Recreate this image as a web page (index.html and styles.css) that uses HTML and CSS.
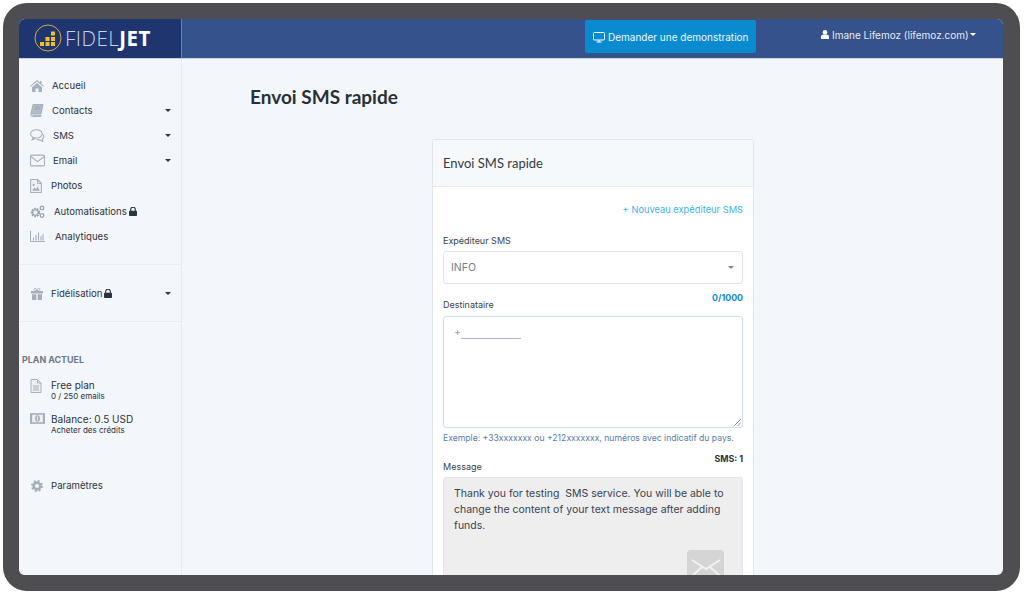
FILE: index.html
```html
<!DOCTYPE html>
<html lang="fr">
<head>
<meta charset="utf-8">
<title>Envoi SMS rapide</title>
<link rel="stylesheet" href="styles.css">
</head>
<body>
<div class="frame">
  <div class="screen">
    <header class="topbar">
      <div class="brand">
        <svg class="logo" viewBox="0 0 28 28" width="28" height="28">
          <circle cx="14" cy="14" r="13" fill="none" stroke="#d9a93a" stroke-width="1"/>
          <g fill="#f6c019">
            <rect x="6" y="18" width="4" height="4"/><rect x="11.500" y="18" width="4" height="4"/><rect x="17" y="18" width="4" height="4"/>
            <rect x="11.500" y="13" width="4" height="4"/><rect x="17" y="13" width="4" height="4"/>
            <rect x="17" y="7.500" width="4" height="4"/>
          </g>
        </svg>
        <span class="wordmark">FIDEL<b>JET</b></span>
      </div>
      <div class="bar">
        <a class="demo">
          <svg viewBox="0 0 12 11" width="12" height="11"><rect x="0.500" y="0.500" width="11" height="7.500" rx="1" fill="none" stroke="#fff"/><path d="M3.500 10h5M6 8v2" stroke="#fff"/></svg>
          Demander une demonstration
        </a>
        <div class="user">
          <svg viewBox="0 0 8 9" width="8" height="9"><circle cx="4" cy="2.300" r="2.300" fill="#fff"/><path d="M0 9V6.500C0 5 1.500 4.500 4 4.500S8 5 8 6.500V9z" fill="#fff"/></svg>
          Imane Lifemoz (lifemoz.com)<i class="caret white"></i>
        </div>
      </div>
    </header>
    <div class="content">
      <aside class="sidebar">
        <nav class="nav">
          <a class="item"><svg class="ico" viewBox="0 0 14 12"><path d="M7 0 0 6l.7.8L7 1.500l6.300 5.300L14 6l-2.500-2.100V1H10v1.600zM2 7.200V12h3.500V8.500h3V12H12V7.200L7 3z" fill="#a6afbc"/></svg><span class="t">Accueil</span></a>
          <a class="item"><svg class="ico tall" viewBox="0 0 14 13"><path d="M3 .5h10L11 10H1z" fill="#b4bcc9" stroke="#9aa4b3" stroke-width=".8"/><path d="M1 10c-.8 1.500 0 2.500 1 2.500h9l.3-1H2.500M5 3h5.500M4.500 5h5.500" fill="none" stroke="#9aa4b3" stroke-width=".8"/></svg><span class="t">Contacts</span><i class="caret"></i></a>
          <a class="item"><svg class="ico wide" viewBox="0 0 14 12"><ellipse cx="6" cy="4.500" rx="5.400" ry="3.900" fill="none" stroke="#a6afbc"/><path d="M3 8 2 10l3-1.500M11.500 4.500c2 1.500 2 3.500 0 4.800L12 11.500 9 10c-1.200.2-2 0-3-.6" fill="none" stroke="#a6afbc"/></svg><span class="t sms">SMS</span><i class="caret"></i></a>
          <a class="item"><svg class="ico wide" viewBox="0 0 14 11"><rect x=".5" y=".5" width="13" height="10" rx="1" fill="none" stroke="#a6afbc"/><path d="m1 2 6 4.500L13 2" fill="none" stroke="#a6afbc"/></svg><span class="t sms">Email</span><i class="caret"></i></a>
          <a class="item"><svg class="ico small" viewBox="0 0 11 13"><path d="M.5.500H7L10.500 4v8.500H.5z" fill="#eef0f4" stroke="#a6afbc"/><path d="M7 .5V4h3.500" fill="none" stroke="#a6afbc"/><circle cx="3.300" cy="5.500" r="1" fill="#a6afbc"/><path d="M2 11l2-3 1.500 1.500L7 7l2 4z" fill="#a6afbc"/></svg><span class="t photos">Photos</span></a>
          <a class="item nudged"><svg class="ico wide" viewBox="0 0 15 13"><circle cx="5.500" cy="7.500" r="3.400" fill="none" stroke="#98a2b0" stroke-width="2.600" stroke-dasharray="1.500 .9"/><circle cx="5.500" cy="7.500" r="3" fill="none" stroke="#98a2b0" stroke-width="1"/><circle cx="12" cy="3" r="1.800" fill="none" stroke="#98a2b0" stroke-width="1.300"/><circle cx="12" cy="10.500" r="1.800" fill="none" stroke="#98a2b0" stroke-width="1.300"/></svg><span class="t auto">Automatisations</span><svg class="lock" viewBox="0 0 8 9"><path d="M1.700 4V2.500a2.300 2.300 0 0 1 4.600 0V4" fill="none" stroke="#2c3340" stroke-width="1.100"/><rect y="3.700" width="8" height="5.300" rx=".7" fill="#2c3340"/></svg></a>
          <a class="item"><svg class="ico wide" viewBox="0 0 15 11"><path d="M.5 0v10.500H15" fill="none" stroke="#a6afbc"/><path d="M3.500 6.500v3M6 4v5.500M8.500 1.500v8M11 5v4.500M13 3v6.500" stroke="#a6afbc" stroke-width="1.100"/></svg><span class="t auto2">Analytiques</span></a>
        </nav>
        <div class="section fidel">
          <a class="item"><svg class="ico" viewBox="0 0 12 12"><path d="M0 3h12v2.500H0zM1 6.300h4.300V12H1zM6.700 6.300H11V12H6.700z" fill="#a6afbc"/><path d="M6 3C3.500 3 2.500 1.500 3.500.7S6 1 6 3c0-2 1.500-3.100 2.500-2.300S8.500 3 6 3z" fill="none" stroke="#a6afbc"/></svg><span class="t photos">Fidélisation</span><svg class="lock" viewBox="0 0 8 9"><path d="M1.700 4V2.500a2.300 2.300 0 0 1 4.600 0V4" fill="none" stroke="#2c3340" stroke-width="1.100"/><rect y="3.700" width="8" height="5.300" rx=".7" fill="#2c3340"/></svg><i class="caret"></i></a>
        </div>
        <div class="plan">
          <h3 class="plan-title">PLAN ACTUEL</h3>
          <div class="plan-row">
            <svg class="ico small" viewBox="0 0 11 14"><path d="M.5.500H7L10.500 4v9.500H.5z" fill="#eef0f4" stroke="#a6afbc"/><path d="M7 .5V4h3.500M2.500 7h6M2.500 9h6M2.500 11h6" fill="none" stroke="#a6afbc"/></svg>
            <div class="plan-text"><span class="p1">Free plan</span><span class="p2">0 / 250 emails</span></div>
          </div>
          <div class="plan-row">
            <svg class="ico money" viewBox="0 0 14 10"><rect width="14" height="10" fill="#a6afbc"/><rect x="2" y="1.500" width="10" height="7" fill="#eef0f4"/><ellipse cx="7" cy="5" rx="2.200" ry="3" fill="#a6afbc"/><path d="M7 3v4" stroke="#eef0f4"/></svg>
            <div class="plan-text"><span class="p1">Balance: 0.5 USD</span><span class="p2">Acheter des crédits</span></div>
          </div>
        </div>
        <a class="item settings"><svg class="ico" viewBox="0 0 12 12"><circle cx="6" cy="6" r="3.300" fill="none" stroke="#a6afbc" stroke-width="2.500"/><circle cx="6" cy="6" r="4.800" fill="none" stroke="#a6afbc" stroke-width="2.400" stroke-dasharray="1.900 1.870"/></svg><span class="t photos">Paramètres</span></a>
      </aside>
      <main class="main">
        <h1 class="page-title">Envoi SMS rapide</h1>
        <section class="card">
          <div class="card-head">Envoi SMS rapide</div>
          <div class="card-body">
            <a class="new-link">+ Nouveau expéditeur SMS</a>
            <label class="lbl first">Expéditeur SMS</label>
            <div class="select">INFO<i class="caret grey"></i></div>
            <div class="count blue">0/1000</div>
            <label class="lbl dest">Destinataire</label>
            <div class="textarea">
              <span class="plus">+</span><span class="line"></span>
              <svg class="grip" viewBox="0 0 8 8" width="8" height="8"><path d="M1 8l7-7M4.500 8 8 4.500" stroke="#8b8f96"/></svg>
            </div>
            <p class="help">Exemple: +33xxxxxxx ou +212xxxxxxx, numéros avec indicatif du pays.</p>
            <div class="count dark">SMS: 1</div>
            <label class="lbl msg">Message</label>
            <div class="message">
              <p class="msg-text">Thank you for testing&nbsp; SMS service. You will be able to change the content of your text message after adding funds.</p>
              <div class="env"><svg viewBox="0 0 36 26" width="36" height="26"><path d="M4 6l14 9L32 6M4 22l10-9M32 22 22 13" fill="none" stroke="#f2f2f3" stroke-width="2"/></svg></div>
            </div>
          </div>
        </section>
      </main>
    </div>
  </div>
</div>
</body>
</html>
```
FILE: styles.css
```css
* { box-sizing: border-box; }
html, body { margin: 0; height: 100%; background: #fff; overflow: hidden; }
body { font-family: Inter, "Liberation Sans", sans-serif; color: #2c3340; }
.frame {
  width: 1017px; height: 588px; margin: 3px 0 0 3px;
  padding: 16px; background: #4e4d52; border-radius: 24px;
}
.screen {
  display: flex; flex-direction: column; width: 984px; height: 556px;
  border-radius: 6px; overflow: hidden; background: #f3f6fa;
}
.topbar { display: flex; flex: 0 0 40px; border-bottom: 1px solid #c8d0dd; }
.brand {
  flex: 0 0 163px; display: flex; align-items: center; padding: 0 0 2px 15px; gap: 3px;
  background: #1f3570; border-right: 1px solid #6b7ea6;
}
.logo { flex: none; }
.wordmark { font-family: "Open Sans", sans-serif; font-size: 20.500px; color: #c9d3e6; letter-spacing: .5px; font-weight: 300; }
.wordmark b { color: #fff; font-weight: 700; }
.bar { flex: 1; display: flex; align-items: flex-start; background: #36528c; padding: 1px 0 0 403px; }
.demo {
  display: flex; align-items: center; gap: 3px; width: 171px; height: 33px; padding: 1px 0 0 8px;
  background: #0a8bd0; border-radius: 2px; color: #eef6fb; font-size: 10px; white-space: nowrap;
}
.user {
  display: flex; align-items: center; gap: 3px; margin: 6px 0 0 65px; height: 17px;
  color: #e6ebf3; font-size: 10px; white-space: nowrap;
}
.caret {
  display: inline-block; width: 0; height: 0; border: 3px solid transparent; border-top-color: #2c3340; border-bottom: 0;
}
.caret.white { border-top-color: #fff; margin-left: -2px; }
.content { flex: 1; display: flex; min-height: 0; }
.sidebar { flex: 0 0 163px; background: #f3f6fa; border-right: 1px solid #e6eaf0; }
.nav { padding: 14px 0 15px; border-bottom: 1px solid #e9edf2; }
.item { display: flex; align-items: center; height: 25px; padding: 0 10px 0 11px; font-size: 9.600px; color: #2c3340; }
.item.nudged { margin-top: 1px; }
.item .caret { margin-left: auto; }
.ico { flex: none; width: 14px; height: 12px; }
.ico.tall { height: 13px; }
.ico.wide { width: 15px; height: 13px; margin-right: -1px; }
.ico.small { width: 12px; height: 14px; margin-right: 2px; }
.ico.money { width: 15px; height: 11px; margin-right: -1px; }
.t { margin-left: 8px; }
.t.sms { margin-left: 9px; }
.t.photos { margin-left: 7px; }
.t.auto { margin-left: 10px; }
.t.auto2 { margin-left: 11px; }
.lock { width: 8px; height: 9px; margin-left: 2px; flex: none; }
.section.fidel { padding: 16px 0 15px; border-bottom: 1px solid #e9edf2; }
.plan { padding-top: 31px; }
.plan-title { margin: 0 0 12px 3px; font-size: 8.900px; line-height: 14px; font-weight: 700; color: #6b7788; }
.plan-row { display: flex; align-items: flex-start; padding-left: 11px; height: 34px; gap: 7px; }
.plan-text { display: flex; flex-direction: column; }
.p1 { font-size: 10px; line-height: 12px; }
.p2 { font-size: 8px; line-height: 10px; }
.settings { margin-top: 26px; }
.main { flex: 1; min-width: 0; overflow: hidden; }
.page-title { margin: 26px 0 30px 68px; font-family: Lato, sans-serif; font-size: 19px; line-height: 24px; font-weight: 700; color: #2a3038; }
.card { width: 322px; margin-left: 250px; background: #fff; border: 1px solid #dfe5ec; border-radius: 3px 3px 0 0; }
.card-head {
  height: 47px; padding: 0 10px; display: flex; align-items: center;
  font-family: Lato, sans-serif; font-size: 13px; color: #333a45;
  background: #f6f9fb; border-bottom: 1px solid #e6ebf0; border-radius: 3px 3px 0 0;
}
.card-body { padding: 15px 10px 0; }
.new-link { display: block; text-align: right; font-size: 9.300px; line-height: 16px; color: #3fb1e8; }
.lbl { display: block; font-size: 9px; line-height: 12px; color: #3a414c; }
.lbl.first { margin-top: 17px; }
.select {
  display: flex; align-items: center; justify-content: space-between; height: 33px; margin-top: 4px; padding: 0 8px 0 7px;
  border: 1px solid #dfe5ec; border-radius: 3px; font-size: 10.500px; color: #76808d;
}
.caret.grey { border-top-color: #80868f; }
.count { text-align: right; font-size: 8.800px; line-height: 12px; font-weight: 700; }
.count.blue { margin-top: 8px; color: #1589cc; }
.count.dark { margin-top: 8px; color: #2c3340; }
.lbl.dest { margin-top: -5px; }
.textarea {
  position: relative; height: 112px; margin-top: 5px; padding: 7px 10px; display: flex; align-items: flex-start;
  border: 1px solid #d3dde9; border-radius: 3px; box-shadow: 0 0 1px #d3dde9;
}
.plus { font-size: 10.500px; line-height: 15px; color: #9aa3ae; }
.line { width: 60px; height: 15px; border-bottom: 1px solid #aab6cf; }
.grip { position: absolute; right: 1px; bottom: 1px; }
.help { margin: 4px 0 0; font-size: 8.650px; line-height: 13px; color: #5b7ba8; white-space: nowrap; }
.lbl.msg { margin-top: -4px; }
.message {
  height: 110px; margin-top: 4px; padding: 8px 10px; background: #eeeeef;
  border: 1px solid #dfe5ec; border-radius: 3px;
}
.msg-text { margin: 0; font-size: 10.500px; line-height: 16px; color: #3a424f; }
.env {
  display: flex; align-items: center; justify-content: center; width: 37px; height: 34px;
  margin: 16px 0 0 233px; background: #d5d5d6; border-radius: 4px;
}
```
